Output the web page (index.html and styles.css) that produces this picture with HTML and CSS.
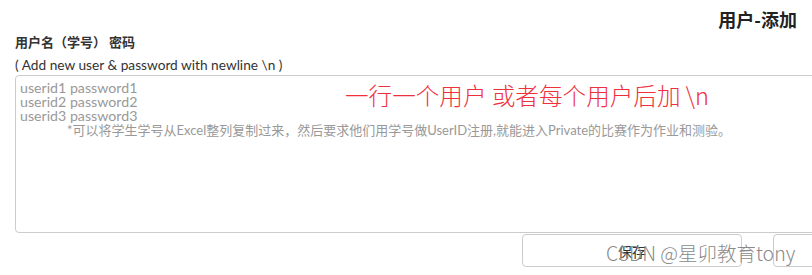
FILE: index.html
```html
<!DOCTYPE html>
<html lang="zh-CN">
<head>
<meta charset="utf-8">
<title>用户-添加</title>
<link rel="stylesheet" href="styles.css">
</head>
<body>
<div class="page">
  <h3 class="title">用户-添加</h3>
  <div class="form">
    <div class="label">用户名（学号） 密码</div>
    <div class="hint">( Add new user &amp; password with newline \n )</div>
    <div class="field">
      <div class="textbox" role="textbox" aria-multiline="true">
        <div class="ph">userid1 password1</div>
        <div class="ph">userid2 password2</div>
        <div class="ph">userid3 password3</div>
        <div class="ph note">*可以将学生学号从Excel整列复制过来，然后要求他们用学号做UserID注册,就能进入Private的比赛作为作业和测验。</div>
      </div>
      <div class="annot">一行一个用户 或者每个用户后加 \n</div>
    </div>
    <div class="actions">
      <button class="btn btn-save" type="button">保存</button>
      <button class="btn btn-other" type="button"></button>
    </div>
  </div>
  <div class="watermark">CSDN @星卯教育tony</div>
</div>
</body>
</html>
```
FILE: styles.css
```css
html, body {
  margin: 0;
  padding: 0;
  background: #fff;
  overflow: hidden;
}
body {
  width: 812px;
  height: 275px;
  font-family: Lato, "Noto Sans CJK SC", sans-serif;
  color: #333;
}
.page {
  position: relative;
  height: 275px;
}
.title {
  margin: 0;
  padding: 8px 15px 0 0;
  height: 22px;
  line-height: 22px;
  font-size: 18px;
  font-weight: 700;
  text-align: right;
  color: #222;
  font-family: "Noto Sans CJK SC", sans-serif;
}
.form {
  padding-left: 15px;
  width: 900px;
}
.label {
  margin-top: 3px;
  font-size: 13px;
  line-height: 17px;
  font-weight: 700;
  font-family: "Noto Sans CJK SC", sans-serif;
  color: #333;
}
.hint {
  margin-top: 5px;
  font-size: 13.7px;
  line-height: 20px;
  color: #333;
}
.field {
  position: relative;
}
.textbox {
  box-sizing: border-box;
  height: 158px;
  border: 1px solid #ccc;
  border-radius: 4px;
  padding: 5px 4px;
  font-size: 14.2px;
  line-height: 14px;
  color: #999;
}
.ph {
  white-space: pre;
}
.note {
  padding-left: 47px;
  font-size: 13px;
}
.annot {
  position: absolute;
  left: 330px;
  top: 5px;
  font-size: 23.6px;
  line-height: 30px;
  font-weight: 300;
  color: #ef2f3c;
  font-family: "Noto Sans CJK SC", sans-serif;
  white-space: nowrap;
}
.actions {
  display: flex;
  gap: 31px;
  padding-left: 507px;
  margin-top: 1px;
}
.btn {
  box-sizing: border-box;
  flex: none;
  height: 33px;
  width: 220px;
  border: 1px solid #ccc;
  border-radius: 4px;
  background: #fff;
  font-family: "Noto Sans CJK SC", sans-serif;
  font-size: 14px;
  color: #333;
  padding: 0;
  text-align: center;
}
.watermark {
  position: absolute;
  left: 606px;
  top: 240px;
  font-size: 19.5px;
  line-height: 26px;
  color: #8a8a8a;
  font-family: "Noto Sans CJK SC", sans-serif;
  font-weight: 300;
  white-space: nowrap;
}
```
